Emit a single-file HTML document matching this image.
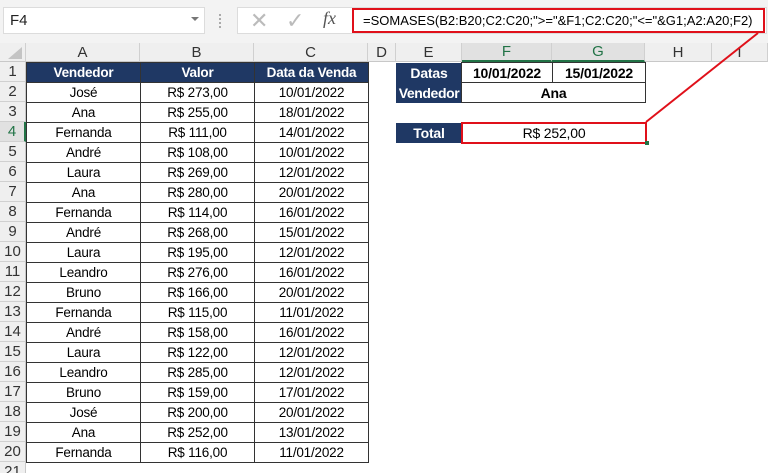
<!DOCTYPE html>
<html><head><meta charset="utf-8"><style>
*{margin:0;padding:0;box-sizing:border-box}
html,body{width:768px;height:473px;overflow:hidden}
body{background:#fff;font-family:"Liberation Sans",Calibri,sans-serif;position:relative}
.a{position:absolute}
.c{position:absolute;display:flex;align-items:center;justify-content:center;font-size:13.5px;color:#000;white-space:nowrap;letter-spacing:-0.2px}
.ch{position:absolute;top:43px;height:19px;background:#efefef;border-right:1px solid #d0d0d0;border-bottom:1px solid #c8c8c8;font-size:15px;color:#333;display:flex;align-items:center;justify-content:center}
.rh{position:absolute;left:0;width:26px;height:20px;background:#efefef;border-bottom:1px solid #d0d0d0;border-right:1px solid #c8c8c8;font-size:15px;color:#333;display:flex;align-items:center;justify-content:center}
.hd{background:#1f3864;color:#fff;font-weight:bold}
.t{border:1px solid #333}
</style></head><body>
<div class="a" style="left:0;top:0;width:768px;height:43px;background:#f3f3f3"></div>
<div class="a" style="left:3px;top:7px;width:202px;height:27px;background:#fff;border:1px solid #dcdcdc;font-size:15px;line-height:25px;padding-left:6px;color:#222">F4</div>
<div class="a" style="left:191px;top:17px;width:0;height:0;border-left:4px solid transparent;border-right:4px solid transparent;border-top:4px solid #777"></div>
<div class="a" style="left:219px;top:14px;width:2px;height:14px;border-left:2px dotted #aaa"></div>
<div class="a" style="left:237px;top:7px;width:530px;height:27px;background:#fff;border:1px solid #dcdcdc"></div>
<div class="a" style="left:250px;top:8px;font-size:22px;color:#bbb">✕</div>
<div class="a" style="left:286px;top:8px;font-size:22px;color:#bbb">✓</div>
<div class="a" style="left:323px;top:8px;font-size:18px;color:#555;font-style:italic;font-family:'Liberation Serif',serif">fx</div>
<div class="a" style="left:352px;top:8px;width:413px;height:25px;border:2px solid #e0101a;font-size:13px;line-height:21px;padding-left:9px;color:#000;white-space:nowrap;letter-spacing:0;overflow:hidden">=SOMASES(B2:B20;C2:C20;"&gt;="&amp;F1;C2:C20;"&lt;="&amp;G1;A2:A20;F2)</div>
<div class="ch" style="left:0;width:26px"></div>
<div class="a" style="left:8px;top:47px;width:0;height:0;border-left:14px solid transparent;border-bottom:12px solid #c4c4c4"></div>
<div class="ch" style="left:26px;width:114px">A</div>
<div class="ch" style="left:140px;width:114px">B</div>
<div class="ch" style="left:254px;width:114px">C</div>
<div class="ch" style="left:368px;width:28px">D</div>
<div class="ch" style="left:396px;width:66px">E</div>
<div class="ch" style="left:462px;width:90px;background:#e1e1e1;color:#217346;border-bottom:2px solid #217346">F</div>
<div class="ch" style="left:552px;width:93px;background:#e1e1e1;color:#217346;border-bottom:2px solid #217346">G</div>
<div class="ch" style="left:645px;width:67px">H</div>
<div class="ch" style="left:712px;width:56px">I</div>
<div id="rows"></div>
<script>
var d=[["José","273","10"],["Ana","255","18"],["Fernanda","111","14"],["André","108","10"],["Laura","269","12"],["Ana","280","20"],["Fernanda","114","16"],["André","268","15"],["Laura","195","12"],["Leandro","276","16"],["Bruno","166","20"],["Fernanda","115","11"],["André","158","16"],["Laura","122","12"],["Leandro","285","12"],["Bruno","159","17"],["José","200","20"],["Ana","252","13"],["Fernanda","116","11"]];
var h='';
for(var r=1;r<=21;r++){var y=62+(r-1)*20;
h+='<div class="rh" style="top:'+y+'px;'+(r==4?'background:#e1e1e1;color:#217346;border-right:2px solid #217346':'')+'">'+r+'</div>';}
h+='<div class="c hd t" style="left:26px;top:62px;width:115px;height:21px">Vendedor</div>';
h+='<div class="c hd t" style="left:140px;top:62px;width:115px;height:21px">Valor</div>';
h+='<div class="c hd t" style="left:254px;top:62px;width:115px;height:21px">Data da Venda</div>';
for(var i=0;i<d.length;i++){var y=82+i*20;
h+='<div class="c t" style="left:26px;top:'+y+'px;width:115px;height:21px">'+d[i][0]+'</div>';
h+='<div class="c t" style="left:140px;top:'+y+'px;width:115px;height:21px">R$ '+d[i][1]+',00</div>';
h+='<div class="c t" style="left:254px;top:'+y+'px;width:115px;height:21px">'+d[i][2]+'/01/2022</div>';}
document.getElementById('rows').innerHTML=h;
</script>
<div class="c hd" style="left:396px;top:63px;width:66px;height:20px;font-size:14px">Datas</div>
<div class="c hd" style="left:396px;top:83px;width:66px;height:20px;font-size:14px;letter-spacing:-0.4px">Vendedor</div>
<div class="c t" style="left:461px;top:62px;width:92px;height:21px;font-weight:bold;font-size:14px">10/01/2022</div>
<div class="c t" style="left:552px;top:62px;width:94px;height:21px;font-weight:bold;font-size:14px">15/01/2022</div>
<div class="c t" style="left:461px;top:82px;width:185px;height:21px;font-weight:bold;font-size:14px">Ana</div>
<div class="c hd" style="left:396px;top:123px;width:66px;height:20px;font-size:14px">Total</div>
<div class="c" style="left:461px;top:122px;width:186px;height:22px;border:2px solid #e0101a;font-size:14px">R$ 252,00</div>
<div class="a" style="left:645px;top:141px;width:4px;height:4px;background:#217346"></div>
<svg class="a" style="left:0;top:0" width="768" height="473"><line x1="758" y1="33" x2="646" y2="122" stroke="#e0101a" stroke-width="2"/></svg>
</body></html>
